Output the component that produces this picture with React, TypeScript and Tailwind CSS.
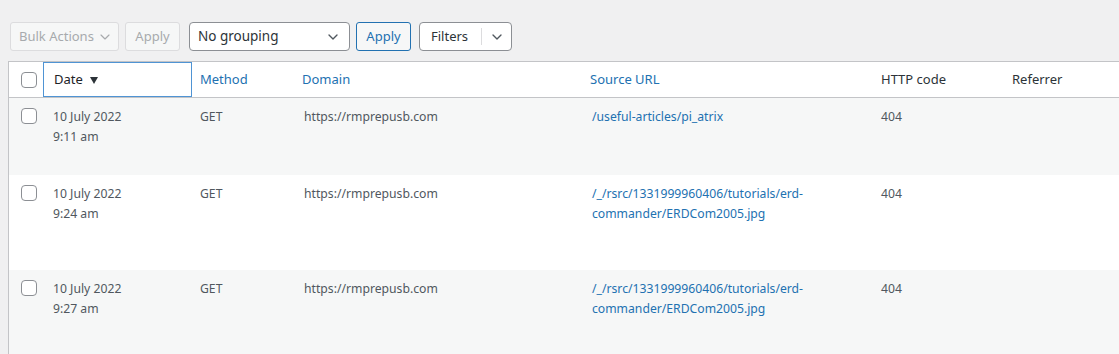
import React from 'react';
import { ChevronDown } from 'lucide-react';

interface LogRow {
  date: string;
  time: string;
  method: string;
  domain: string;
  url: string[];
  code: string;
  height: string;
  striped: boolean;
}

const rows: LogRow[] = [
  {
    date: '10 July 2022',
    time: '9:11 am',
    method: 'GET',
    domain: 'https://rmprepusb.com',
    url: ['/useful-articles/pi_atrix'],
    code: '404',
    height: 'h-[77px]',
    striped: true,
  },
  {
    date: '10 July 2022',
    time: '9:24 am',
    method: 'GET',
    domain: 'https://rmprepusb.com',
    url: ['/_/rsrc/1331999960406/tutorials/erd-', 'commander/ERDCom2005.jpg'],
    code: '404',
    height: 'h-[95px]',
    striped: false,
  },
  {
    date: '10 July 2022',
    time: '9:27 am',
    method: 'GET',
    domain: 'https://rmprepusb.com',
    url: ['/_/rsrc/1331999960406/tutorials/erd-', 'commander/ERDCom2005.jpg'],
    code: '404',
    height: 'h-[95px]',
    striped: true,
  },
];

const cols = 'grid grid-cols-[34px_149px_100px_288px_291px_131px_1fr]';

const Checkbox = () => (
  <span className="block w-4 h-4 rounded-[4px] border border-[#8c8f94] bg-white" />
);

const App: React.FC = () => {
  return (
    <div className="w-[1119px] h-[354px] overflow-hidden bg-[#f0f0f1] text-[12.2px] text-[#50575e] font-['Segoe_UI','Noto_Sans',sans-serif]">
      {/* Toolbar */}
      <div className="flex items-center h-[29px] mt-[22px] pl-[10px] whitespace-nowrap">
        <div className="flex items-center gap-[3px] h-full w-[109px] pl-2 rounded-[3px] border border-[#dcdcde] bg-[#f6f7f7] text-[#a7aaad] text-[13px]">
          <span>Bulk Actions</span>
          <ChevronDown className="w-4 h-4" strokeWidth={1.75} />
        </div>
        <div className="ml-[6px] flex items-center justify-center h-full w-[55px] rounded-[3px] border border-[#dcdcde] bg-[#f6f7f7] text-[#a7aaad] text-[13px]">
          Apply
        </div>
        <div className="ml-[9px] flex items-center justify-between h-full w-[161px] pl-2 pr-2 rounded-[4px] border border-[#8c8f94] bg-white text-[#2c3338] text-[13.5px]">
          <span>No grouping</span>
          <ChevronDown className="w-4 h-4 text-[#50575e]" strokeWidth={2} />
        </div>
        <div className="ml-[6px] flex items-center justify-center h-full w-[55px] rounded-[3px] border border-[#2271b1] bg-[#f6f7f7] text-[#2271b1] text-[13px]">
          Apply
        </div>
        <div className="ml-[8px] flex items-center h-full w-[93px] rounded-[4px] border border-[#8c8f94] bg-white text-[#2c3338] text-[13px]">
          <span className="pl-[11px] w-[61px]">Filters</span>
          <span className="w-px h-[17px] bg-[#dcdcde]" />
          <span className="flex-1 flex justify-center">
            <ChevronDown className="w-4 h-4 text-[#50575e]" strokeWidth={2} />
          </span>
        </div>
      </div>

      {/* Table */}
      <div className="mt-[10px] ml-2 border-l border-t border-[#c3c4c7] bg-white">
        <div className={`${cols} h-[36px] border-b border-[#c3c4c7] bg-white text-[13px]`}>
          <div className="flex items-center pl-3">
            <Checkbox />
          </div>
          <div className="flex items-center gap-[7px] pl-[10px] border border-[#4f94d4] text-[#1d2327]">
            <span>Date</span>
            <svg width="8" height="7" viewBox="0 0 8 7" className="mt-px">
              <path d="M0 0h8L4 7z" fill="#2c3338" />
            </svg>
          </div>
          <div className="flex items-center pl-2 text-[#2271b1]">Method</div>
          <div className="flex items-center pl-[10px] text-[#2271b1]">Domain</div>
          <div className="flex items-center pl-[10px] text-[#2271b1]">Source URL</div>
          <div className="flex items-center pl-[10px] text-[#2c3338]">HTTP code</div>
          <div className="flex items-center pl-[10px] text-[#2c3338]">Referrer</div>
        </div>

        {rows.map((r, i) => (
          <div
            key={i}
            className={`${cols} ${r.height} ${r.striped ? 'bg-[#f6f7f7]' : 'bg-white'} leading-[19.5px] pt-[9px]`}
          >
            <div className="pl-3 pt-px">
              <Checkbox />
            </div>
            <div className="pl-[10px]">
              <div>{r.date}</div>
              <div>{r.time}</div>
            </div>
            <div className="pl-[10px] -ml-[2px]">{r.method}</div>
            <div className="pl-[12px]">{r.domain}</div>
            <div className="pl-[12px] text-[#2271b1]">
              {r.url.map((u, j) => (
                <div key={j}>{u}</div>
              ))}
            </div>
            <div className="pl-[10px]">{r.code}</div>
            <div className="pl-[10px]" />
          </div>
        ))}
      </div>
    </div>
  );
};

export default App;
